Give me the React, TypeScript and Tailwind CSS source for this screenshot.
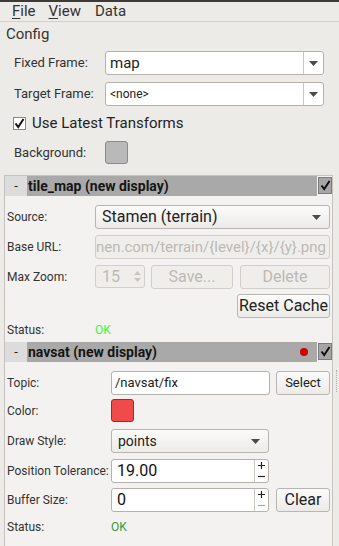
import React from 'react'

function Arrow({ color = '#4a4a4a' }: { color?: string }) {
  return (
    <svg width="9" height="5" viewBox="0 0 9 5">
      <path d="M0 0 H9 L4.5 5 Z" fill={color} />
    </svg>
  )
}

function Check() {
  return (
    <svg width="11" height="11" viewBox="0 0 11 11">
      <path d="M1.5 5.5 L4.2 9 L9.5 1" fill="none" stroke="#111" strokeWidth="2" />
    </svg>
  )
}

function Combo({ value, className = '', small = false }: { value: string; className?: string; small?: boolean }) {
  return (
    <div className={`flex h-[24px] bg-white border border-[#b5b2ad] rounded-[3px] ${className}`}>
      <div className={`flex-1 flex items-center pl-[4px] text-[#222] ${small ? 'text-[12px]' : 'text-[15px]'}`}>{value}</div>
      <div className="w-[20px] flex items-center justify-center border-l border-[#c9c6c1]">
        <Arrow />
      </div>
    </div>
  )
}

function ButtonCombo({ value, className = '', text = 'text-[16px]' }: { value: string; className?: string; text?: string }) {
  return (
    <div className={`flex h-[24px] bg-gradient-to-b from-[#fbfbfa] to-[#ecebe8] border border-[#b9b6b1] rounded-[3px] ${className}`}>
      <div className={`flex-1 flex items-center pl-[6px] text-[#222] whitespace-nowrap ${text}`}>{value}</div>
      <div className="w-[26px] flex items-center justify-center">
        <Arrow />
      </div>
    </div>
  )
}

function Btn({ label, className = '', disabled = false, text = 'text-[16px]' }: { label: string; className?: string; disabled?: boolean; text?: string }) {
  return (
    <div
      className={`h-[24px] flex items-center justify-center rounded-[3px] border whitespace-nowrap ${text} ${
        disabled
          ? 'border-[#d2cfca] bg-[#efeeeb] text-[#bdbab5]'
          : 'border-[#b9b6b1] bg-gradient-to-b from-[#fbfbfa] to-[#ecebe8] text-[#222]'
      } ${className}`}
    >
      {label}
    </div>
  )
}

function Spin({ value, className = '', minusDim = false }: { value: string; className?: string; minusDim?: boolean }) {
  return (
    <div className={`flex h-[24px] bg-white border border-[#b5b2ad] rounded-[3px] ${className}`}>
      <div className="flex-1 flex items-center pl-[5px] text-[16px] text-[#111]">{value}</div>
      <div className="w-[14px] flex flex-col border-l border-[#c9c6c1]">
        <div className="flex-1 flex items-center justify-center">
          <svg width="7" height="7" viewBox="0 0 7 7"><path d="M0 3.5 H7 M3.5 0 V7" stroke="#222" strokeWidth="1.2" /></svg>
        </div>
        <div className="flex-1 flex items-center justify-center">
          <svg width="7" height="7" viewBox="0 0 7 7"><path d="M0 3.5 H7" stroke={minusDim ? '#a9a7a3' : '#222'} strokeWidth="1.2" /></svg>
        </div>
      </div>
    </div>
  )
}

function Header({ title, dot = false }: { title: string; dot?: boolean }) {
  return (
    <div className="h-[20px] flex">
      <div className="w-[22px] bg-[#dcdcdc] flex items-center justify-center text-[13px] text-[#222]">-</div>
      <div className="flex-1 bg-[#a9a9a9] flex items-center pl-[1px] text-[14px] font-bold text-[#151515] relative">
        {title}
        {dot && <div className="absolute right-[9px] top-[6px] w-[8px] h-[8px] rounded-full bg-[#d40000]" />}
      </div>
      <div className="w-[14px] ml-[1px] mt-[1px] h-[17px] border border-[#7c7c7c] bg-[#a6a6a6] flex items-center justify-center">
        <Check />
      </div>
    </div>
  )
}

export default function App() {
  return (
    <div className="w-[339px] h-[546px] overflow-hidden bg-[#edebe8] font-['Roboto',sans-serif] text-[#333] flex flex-col">
      <div className="h-[2px] bg-[#3c3b37]" />
      <div className="h-[20px] flex items-center text-[15px] text-[#333] border-b border-[#d3d0cb]">
        <span className="ml-[12px]"><span className="underline underline-offset-2">F</span>ile</span>
        <span className="ml-[13px]"><span className="underline underline-offset-2">V</span>iew</span>
        <span className="ml-[14px]">Data</span>
      </div>
      <div className="h-[29px] pl-[6px] pt-[1px] text-[15px] text-[#333]">Config</div>

      <div className="flex items-center h-[24px] pl-[14px]">
        <div className="w-[91px] text-[13px] whitespace-nowrap">Fixed Frame:</div>
        <Combo value="map" className="w-[219px]" />
      </div>
      <div className="flex items-center h-[24px] pl-[14px] mt-[7px]">
        <div className="w-[91px] text-[13px] whitespace-nowrap">Target Frame:</div>
        <Combo value="<none>" className="w-[219px]" small />
      </div>
      <div className="flex items-center h-[24px] pl-[13px] mt-[5px]">
        <div className="w-[13px] h-[13px] border border-[#8a8884] bg-white flex items-center justify-center">
          <Check />
        </div>
        <div className="ml-[6px] text-[15px] text-[#222]">Use Latest Transforms</div>
      </div>
      <div className="flex items-center h-[23px] pl-[14px] mt-[6px]">
        <div className="w-[91px] text-[13px]">Background:</div>
        <div className="w-[23px] h-[23px] rounded-[3px] border border-[#8d8b87] bg-[#b9b9b9]" />
      </div>

      <div className="flex flex-1 mt-[11px]">
        <div className="w-[4px]" />
        <div className="w-[329px] border-l border-t border-r border-[#c6c3be] bg-[#f3f2f0] flex flex-col">
          <Header title="tile_map (new display)" />
          <div className="flex items-center h-[24px] mt-[9px] pl-[2px] pr-[2px]">
            <div className="w-[88px] text-[12px]">Source:</div>
            <ButtonCombo value="Stamen (terrain)" className="flex-1" />
          </div>
          <div className="flex items-center h-[24px] mt-[6px] pl-[2px] pr-[2px]">
            <div className="w-[88px] text-[12px]">Base URL:</div>
            <div className="w-[235px] h-[24px] rounded-[3px] border border-[#d2cfca] bg-[#efeeeb] overflow-hidden flex items-center justify-end pr-[3px] text-[15px] text-[#bdbab5] whitespace-nowrap">
              nen.com/terrain/{'{level}'}/{'{x}'}/{'{y}'}.png
            </div>
          </div>
          <div className="flex items-center h-[23px] mt-[6px] pl-[2px] pr-[2px]">
            <div className="w-[88px] text-[12px]">Max Zoom:</div>
            <div className="w-[50px] h-[23px] flex rounded-[3px] border border-[#d2cfca] bg-[#efeeeb]">
              <div className="flex-1 flex items-center pl-[6px] text-[16px] text-[#bdbab5]">15</div>
              <div className="w-[13px] flex flex-col items-center justify-center gap-[3px]">
                <svg width="7" height="4" viewBox="0 0 7 4"><path d="M0 4 L3.5 0 L7 4 Z" fill="#c9c6c1" /></svg>
                <svg width="7" height="4" viewBox="0 0 7 4"><path d="M0 0 L3.5 4 L7 0 Z" fill="#c9c6c1" /></svg>
              </div>
            </div>
            <Btn label="Save..." disabled className="w-[82px] ml-[6px] h-[23px]" />
            <Btn label="Delete" disabled className="flex-1 ml-[7px] h-[23px]" />
          </div>
          <div className="flex justify-end h-[23px] mt-[6px] pr-[2px]">
            <Btn label="Reset Cache" className="w-[93px] h-[23px]" />
          </div>
          <div className="flex items-center h-[20px] mt-[3px] pl-[2px]">
            <div className="w-[88px] text-[12px]">Status:</div>
            <div className="text-[12px] text-[#3cf53c]">OK</div>
          </div>

          <div className="mt-[2px]">
            <Header title="navsat (new display)" dot />
          </div>
          <div className="flex items-center h-[24px] mt-[9px] pl-[2px] pr-[2px]">
            <div className="w-[104px] text-[12px]">Topic:</div>
            <div className="w-[159px] h-[24px] bg-white border border-[#b5b2ad] rounded-[3px] flex items-center pl-[3px] text-[13px] text-[#222]">/navsat/fix</div>
            <Btn label="Select" className="flex-1 ml-[6px]" text="text-[13px]" />
          </div>
          <div className="flex items-center h-[23px] mt-[4px] pl-[2px]">
            <div className="w-[104px] text-[12px]">Color:</div>
            <div className="w-[23px] h-[23px] rounded-[3px] border border-[#a02a2a] bg-[#f04a4a]" />
          </div>
          <div className="flex items-center h-[24px] mt-[7px] pl-[2px]">
            <div className="w-[104px] text-[12px]">Draw Style:</div>
            <ButtonCombo value="points" className="w-[158px]" text="text-[14px]" />
          </div>
          <div className="flex items-center h-[23px] mt-[6px] pl-[2px]">
            <div className="w-[104px] text-[12px] whitespace-nowrap">Position Tolerance:</div>
            <Spin value="19.00" className="w-[158px] h-[23px]" />
          </div>
          <div className="flex items-center h-[24px] mt-[6px] pl-[2px] pr-[2px]">
            <div className="w-[104px] text-[12px]">Buffer Size:</div>
            <Spin value="0" className="w-[158px] h-[23px]" minusDim />
            <Btn label="Clear" className="flex-1 ml-[7px]" />
          </div>
          <div className="flex items-center h-[18px] mt-[6px] pl-[2px]">
            <div className="w-[104px] text-[12px]">Status:</div>
            <div className="text-[12px] text-[#3a9a3a]">OK</div>
          </div>
        </div>
        <div className="flex-1 flex justify-center">
          <div className="mt-[195px] h-[22px] border-l border-dotted border-[#b0ada8]" />
        </div>
      </div>
    </div>
  )
}
